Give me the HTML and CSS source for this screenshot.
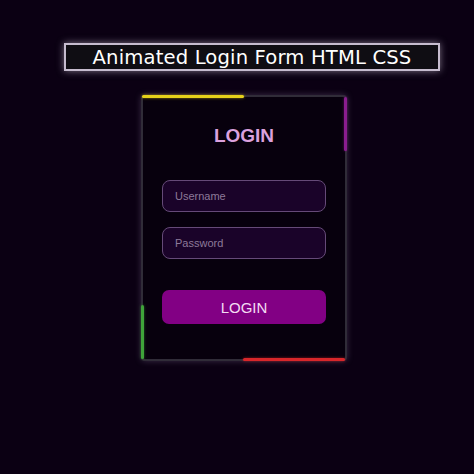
FILE: index.html
```html
<!DOCTYPE html>
<html lang="en">
<head>
<meta charset="utf-8">
<title>Animated Login Form HTML CSS</title>
<link rel="stylesheet" href="styles.css">
</head>
<body>
  <div class="page">
    <h1 class="banner">Animated Login Form HTML CSS</h1>
    <form class="card">
      <span class="edge edge-top"></span>
      <span class="edge edge-right"></span>
      <span class="edge edge-bottom"></span>
      <span class="edge edge-left"></span>
      <h2 class="card-title">LOGIN</h2>
      <input class="field" type="text" placeholder="Username">
      <input class="field" type="password" placeholder="Password">
      <button class="submit" type="button">LOGIN</button>
    </form>
  </div>
</body>
</html>
```
FILE: styles.css
```css
* {
  box-sizing: border-box;
}

html, body {
  margin: 0;
  height: 100%;
  background: #0b0013;
}

.page {
  display: flex;
  flex-direction: column;
  align-items: flex-start;
  padding-top: 43px;
}

.banner {
  margin: 0 0 0 64px;
  width: 376px;
  height: 28px;
  display: flex;
  align-items: center;
  justify-content: center;
  background: #0f0d13;
  border: 2px solid #c6bccf;
  box-shadow: 0 0 7px rgba(235, 225, 245, 0.5);
  color: #ffffff;
  font-family: "DejaVu Sans", Verdana, sans-serif;
  font-size: 19.6px;
  font-weight: normal;
  letter-spacing: 0.15px;
}

.card {
  position: relative;
  margin: 24px 0 0 141px;
  width: 206px;
  height: 266px;
  padding: 0 19px;
  display: flex;
  flex-direction: column;
  background: #07000d;
  border: 2px solid #302c38;
  border-radius: 4px;
  box-shadow: 0 0 6px rgba(130, 110, 150, 0.4);
  font-family: "Liberation Sans", Arial, sans-serif;
}

/* running light segments along the card border */
.edge {
  position: absolute;
  border-radius: 2px;
}

.edge-top {
  top: -2px;
  left: -1px;
  width: 102px;
  height: 3px;
  background: #e6d21a;
  box-shadow: 0 0 3px rgba(230, 210, 26, 0.6);
}

.edge-right {
  top: 0;
  right: -2px;
  width: 3px;
  height: 54px;
  background: #8a1d8f;
  box-shadow: 0 0 3px rgba(138, 29, 143, 0.6);
}

.edge-bottom {
  bottom: -2px;
  right: 0;
  width: 102px;
  height: 3px;
  background: #d8262a;
  box-shadow: 0 0 3px rgba(216, 38, 42, 0.6);
}

.edge-left {
  bottom: 0;
  left: -2px;
  width: 3px;
  height: 54px;
  background: #3fa33a;
  box-shadow: 0 0 3px rgba(63, 163, 58, 0.6);
}

.card-title {
  margin: 27px 0 0;
  text-align: center;
  color: #dba1de;
  font-size: 19px;
  font-weight: bold;
  line-height: 24px;
}

.field {
  margin-top: 32px;
  width: 164px;
  height: 32px;
  padding: 0 12px;
  background: #1a0329;
  border: 1px solid #654a78;
  border-radius: 8px;
  color: #e8d8f0;
  font-family: "Liberation Sans", Arial, sans-serif;
  font-size: 11px;
  outline: none;
}

.field + .field {
  margin-top: 15px;
}

.field::placeholder {
  color: #8d7a99;
}

.submit {
  margin-top: 31px;
  width: 164px;
  height: 34px;
  background: #820084;
  border: none;
  border-radius: 7px;
  color: #f3dcf3;
  font-family: "Liberation Sans", Arial, sans-serif;
  font-size: 15px;
}
```
